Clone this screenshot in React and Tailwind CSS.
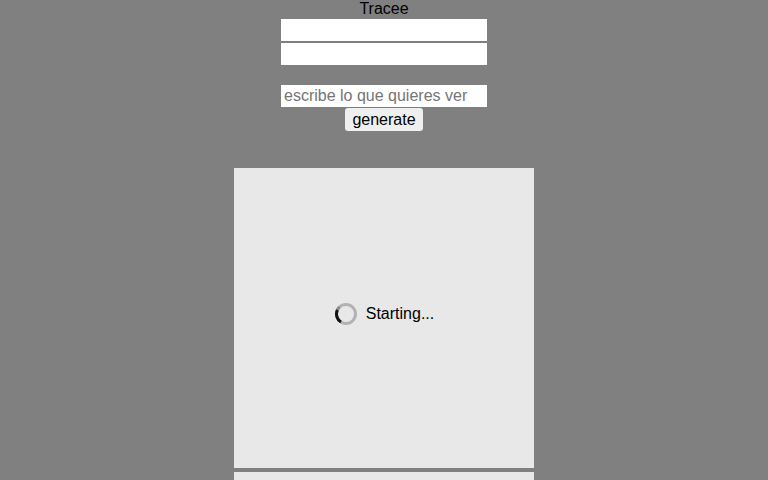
export default function App() {
  return (
    <div className="h-[480px] overflow-hidden bg-[#808080] font-['Liberation_Sans',Arial,sans-serif] text-base text-black">
      <div className="flex flex-col items-center">
        <div className="h-[19px] leading-[18px]">Tracee</div>
        <input className="block h-[22px] w-[206px] bg-white px-[3px] outline-none" />
        <input className="mt-[2px] block h-[22px] w-[206px] bg-white px-[3px] outline-none" />
        <input
          className="mt-[20px] block h-[22px] w-[206px] bg-white px-[3px] leading-[22px] outline-none placeholder:text-[#757575]"
          placeholder="escribe lo que quieres ver"
        />
        <button className="mt-[1px] h-[23px] w-[78px] rounded-[3px] bg-[#efefef] text-center leading-[22px]">generate</button>

        <div className="mt-[37px] flex h-[300px] w-[300px] items-center justify-center bg-[#e8e8e8] pb-[8px] pl-[1px]">
          <div className="flex items-center">
            <svg width="22" height="22" viewBox="0 0 22 22" fill="none" className="mr-[9px]">
              <circle cx="11" cy="11" r="9.5" stroke="#b2b2b2" strokeWidth="3" />
              <path d="M2.4 7 A9.5 9.5 0 0 1 4.5 4" stroke="#8a8a8a" strokeWidth="3" />
              <path d="M6 19.1 A9.5 9.5 0 0 1 2.4 7" stroke="#141414" strokeWidth="3" />
            </svg>
            <span className="leading-[18px]">Starting...</span>
          </div>
        </div>
        <div className="mt-[4px] h-[300px] w-[300px] shrink-0 bg-[#e8e8e8]" />
      </div>
    </div>
  );
}
